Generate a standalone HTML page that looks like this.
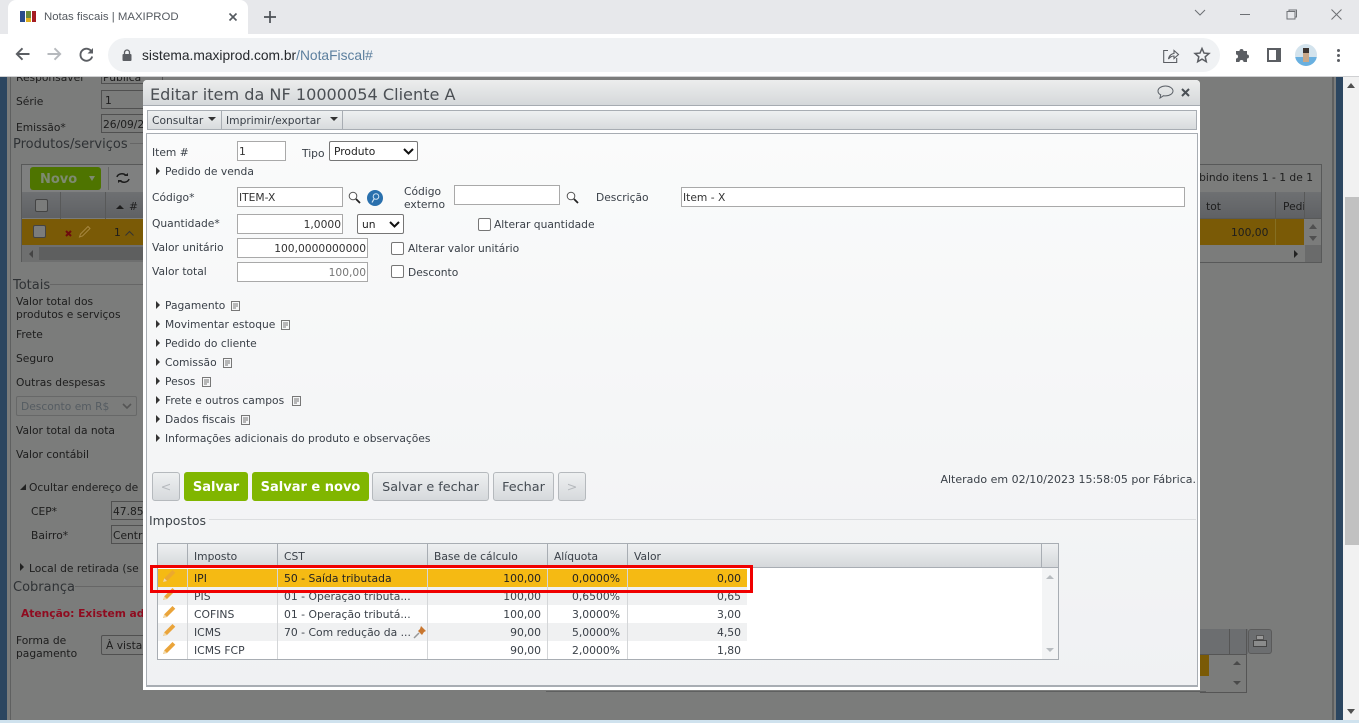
<!DOCTYPE html>
<html><head><meta charset="utf-8"><title>Notas fiscais | MAXIPROD</title>
<style>
html,body{margin:0;padding:0;width:1359px;height:723px;overflow:hidden;background:#7b7c7b;font-family:"DejaVu Sans",sans-serif;font-size:10.7px;color:#3a4048}
.a,.t,.b{position:absolute}
.t{white-space:nowrap;line-height:14px;margin-top:1px}
.d{color:#1d1d1d}
.inp{position:absolute;box-sizing:border-box;border:1px solid #a9a9a9;background:#fff;height:20px;line-height:20px;padding:0 1px;color:#333;white-space:nowrap;overflow:hidden}
.r{text-align:right}
.sel{position:absolute;box-sizing:border-box;border:1px solid #767676;border-radius:2px;background:#fff;height:20px;line-height:19px;padding-left:4px;color:#222}
.cb{position:absolute;box-sizing:border-box;width:13px;height:13px;border:1px solid #767676;border-radius:2px;background:#fff}
.tri{position:absolute;width:0;height:0;border-left:4px solid #333;border-top:4px solid transparent;border-bottom:4px solid transparent}
.btn{position:absolute;box-sizing:border-box;top:472px;height:29px;border:1px solid #b5b9bd;border-radius:3px;background:linear-gradient(#eef0f1,#d6d9dc);text-align:center;line-height:29px;font-size:12.8px;color:#444b52}
.g{background:#80b600;border-color:#80b600;color:#fff;font-weight:bold;font-size:13px}
.cell{position:absolute;white-space:nowrap;line-height:20px;height:18px;overflow:hidden;font-size:10.8px}
.vl{position:absolute;width:1px;background:#d4d6d8}
.rowb{position:absolute;left:158px;width:589px;height:18px}
svg{position:absolute;overflow:visible}
</style></head><body>

<!-- dimmed page -->
<div class="a" style="left:0;top:76px;width:1359px;height:644px;background:#7b7c7b"></div>
<div class="a" style="left:0;top:76px;width:7px;height:644px;background:#2c4660"></div>
<div class="a" style="left:10px;top:76px;width:1px;height:644px;background:#5f6060"></div>
<div class="a" style="left:1332px;top:76px;width:2px;height:644px;background:#5f6060"></div>
<div class="a" style="left:1336px;top:76px;width:7px;height:644px;background:#2c4660"></div>
<div class="a" style="left:1343px;top:76px;width:16px;height:644px;background:#f1f1f1"></div>
<div class="a" style="left:1345px;top:197px;width:14px;height:348px;background:#c1c1c1"></div>
<div class="a" style="left:1347px;top:83px;width:0;height:0;border-left:4px solid transparent;border-right:4px solid transparent;border-bottom:5px solid #505050"></div>
<div class="a" style="left:1347px;top:709px;width:0;height:0;border-left:4px solid transparent;border-right:4px solid transparent;border-top:5px solid #505050"></div>
<div class="a" style="left:0;top:720px;width:1359px;height:3px;background:#cfe2ee"></div>

<div class="t d" style="left:16px;top:70px;">Responsável</div>
<div class="a" style="left:101px;top:70px;width:60px;height:12px;border:1px solid #505050"></div>
<div class="t" style="left:103px;top:70px;color:#1d1d1d">Pública</div>
<div class="t d" style="left:16px;top:94px;">Série</div>
<div class="a" style="left:101px;top:90px;width:60px;height:17px;border:1px solid #505050"></div>
<div class="t d" style="left:105px;top:93px;">1</div>
<div class="t d" style="left:16px;top:120px;">Emissão*</div>
<div class="a" style="left:101px;top:114px;width:60px;height:17px;border:1px solid #505050"></div>
<div class="t d" style="left:103px;top:117px;">26/09/2</div>
<div class="t" style="left:13px;top:137px;font-size:13px;color:#2f3235">Produtos/serviços</div>
<div class="a" style="left:130px;top:143px;width:15px;height:1px;background:#666"></div>

<div class="a" style="left:21px;top:164px;width:1px;height:98px;background:#585959"></div>
<div class="a" style="left:21px;top:164px;width:125px;height:1px;background:#585959"></div>
<div class="a" style="left:22px;top:165px;width:123px;height:27px;background:#7f8080"></div>
<div class="a" style="left:30px;top:167px;width:71px;height:23px;background:#4e7400;border-radius:3px"></div>
<div class="t" style="left:40px;top:172px;font-weight:bold;font-size:13px;color:#7d8a70">Novo</div>
<div class="a" style="left:89px;top:176px;width:0;height:0;border-left:3px solid transparent;border-right:3px solid transparent;border-top:5px solid #7d8a70"></div>
<div class="a" style="left:108px;top:167px;width:1px;height:23px;background:#666"></div>
<svg style="left:116px;top:172px" width="14" height="12"><path d="M1 5a5 4 0 0 1 9-1.500M13 7a5 4 0 0 1-9 1.500" fill="none" stroke="#1d1d1d" stroke-width="1.500"/><path d="M8 4h4V1zM6 8H2v3z" fill="#1d1d1d"/></svg>
<div class="a" style="left:22px;top:192px;width:123px;height:26px;background:linear-gradient(#6e7072,#5f6164)"></div>
<div class="a" style="left:60px;top:192px;width:1px;height:52px;background:#585959"></div>
<div class="a" style="left:105px;top:192px;width:1px;height:52px;background:#585959"></div>
<div class="cb" style="left:35px;top:199px;background:#7b7c7b;border-color:#444"></div>
<div class="a" style="left:116px;top:205px;width:0;height:0;border-left:4px solid transparent;border-right:4px solid transparent;border-bottom:4px solid #1d1d1d"></div>
<div class="t d" style="left:129px;top:199px;">#</div>
<div class="a" style="left:22px;top:219px;width:123px;height:26px;background:#7a5a06"></div>
<div class="cb" style="left:33px;top:225px;background:#7b7c7b;border-color:#444"></div>
<svg style="left:65px;top:230px" width="7" height="7"><path d="M1 1l5 5M6 1l-5 5" stroke="#6e0d0d" stroke-width="2"/></svg>
<svg style="left:78px;top:225px" width="13" height="13"><path d="M1.500 12l1-3L10 1.500l2 2L4.500 11z" fill="none" stroke="#a78740"/></svg>
<div class="t d" style="left:114px;top:225px;">1</div>
<svg style="left:125px;top:231px" width="9" height="5"><path d="M.5 4.500l4-4 4 4" fill="none" stroke="#333"/></svg>
<div class="a" style="left:22px;top:245px;width:123px;height:17px;background:#6e6f6f"></div>
<div class="a" style="left:39px;top:247px;width:106px;height:13px;background:#5e5f5f"></div>
<div class="a" style="left:29px;top:250px;width:0;height:0;border-right:4px solid #444;border-top:4px solid transparent;border-bottom:4px solid transparent"></div>

<div class="a" style="left:1200px;top:164px;width:121px;height:1px;background:#585959"></div>
<div class="a" style="left:1321px;top:164px;width:1px;height:98px;background:#585959"></div>
<div class="a" style="left:1200px;top:262px;width:122px;height:1px;background:#585959"></div>
<div class="t" style="right:46px;top:170px;color:#1d1d1d;">Exibindo itens 1 - 1 de 1</div>
<div class="a" style="left:1200px;top:192px;width:121px;height:26px;background:linear-gradient(#6e7072,#5f6164)"></div>
<div class="a" style="left:1200px;top:218px;width:121px;height:1px;background:#585959"></div>
<div class="t d" style="left:1206px;top:199px;">tot</div>
<div class="t d" style="left:1283px;top:199px;">Pedi</div>
<div class="a" style="left:1275px;top:192px;width:1px;height:27px;background:#585959"></div>
<div class="a" style="left:1304px;top:192px;width:1px;height:27px;background:#585959"></div>
<div class="a" style="left:1200px;top:219px;width:104px;height:26px;background:#7a5a06"></div>
<div class="a" style="left:1275px;top:219px;width:1px;height:26px;background:#856f22"></div>
<div class="t d" style="left:1231px;top:225px;">100,00</div>
<div class="a" style="left:1309px;top:224px;width:0;height:0;border-left:4px solid transparent;border-right:4px solid transparent;border-bottom:5px solid #505050"></div>
<div class="a" style="left:1309px;top:236px;width:0;height:0;border-left:4px solid transparent;border-right:4px solid transparent;border-top:5px solid #505050"></div>
<div class="a" style="left:1305px;top:245px;width:16px;height:17px;background:#6a6b6b"></div>
<div class="tri" style="left:1294px;top:250px;border-left-color:#222"></div>

<div class="t" style="left:13px;top:278px;font-size:13px;color:#2f3235">Totais</div>
<div class="a" style="left:50px;top:284px;width:95px;height:1px;background:#666"></div>
<div class="t d" style="left:16px;top:294px;">Valor total dos</div>
<div class="t d" style="left:16px;top:307px;">produtos e serviços</div>
<div class="t d" style="left:16px;top:327px;">Frete</div>
<div class="t d" style="left:16px;top:351px;">Seguro</div>
<div class="t d" style="left:16px;top:375px;">Outras despesas</div>
<div class="a" style="left:16px;top:396px;width:119px;height:18px;border:1px solid #676868;border-radius:2px"></div>
<div class="t" style="left:21px;top:399px;color:#555c62">Desconto em R$</div>
<svg style="left:122px;top:403px" width="10" height="6"><path d="M1 1l4 4 4-4" fill="none" stroke="#555" stroke-width="1.600"/></svg>
<div class="t d" style="left:16px;top:423px;">Valor total da nota</div>
<div class="t d" style="left:16px;top:447px;">Valor contábil</div>
<div class="t d" style="left:29px;top:480px;">Ocultar endereço de</div>
<div class="a" style="left:20px;top:484px;width:0;height:0;border-left:6px solid transparent;border-bottom:6px solid #222"></div>
<div class="t d" style="left:31px;top:504px;">CEP*</div>
<div class="a" style="left:111px;top:501px;width:34px;height:17px;border:1px solid #505050"></div>
<div class="t d" style="left:113px;top:504px;">47.85</div>
<div class="t d" style="left:31px;top:528px;">Bairro*</div>
<div class="a" style="left:111px;top:525px;width:34px;height:17px;border:1px solid #505050"></div>
<div class="t d" style="left:113px;top:528px;">Centr</div>
<div class="tri" style="left:20px;top:563px;border-left-color:#222"></div>
<div class="t d" style="left:29px;top:561px;">Local de retirada (se</div>
<div class="t" style="left:13px;top:580px;font-size:13px;color:#2f3235">Cobrança</div>
<div class="a" style="left:75px;top:586px;width:70px;height:1px;background:#666"></div>
<div class="t" style="left:21px;top:606px;font-weight:bold;color:#8f0b1f">Atenção: Existem ad</div>
<div class="t d" style="left:16px;top:633px;">Forma de</div>
<div class="t d" style="left:16px;top:646px;">pagamento</div>
<div class="a" style="left:101px;top:635px;width:44px;height:18px;border:1px solid #505050;border-radius:2px"></div>
<div class="t d" style="left:106px;top:638px;">À vista</div>

<div class="a" style="left:1200px;top:629px;width:48px;height:25px;background:#6c6e70"></div>
<div class="a" style="left:1229px;top:629px;width:1px;height:25px;background:#555"></div>
<div class="a" style="left:1246px;top:629px;width:1px;height:63px;background:#555"></div>
<div class="a" style="left:1200px;top:654px;width:46px;height:1px;background:#555"></div>
<div class="a" style="left:1200px;top:655px;width:9px;height:21px;background:#7a5a06"></div>
<div class="a" style="left:1200px;top:692px;width:47px;height:1px;background:#555"></div>
<div class="a" style="left:1233px;top:661px;width:0;height:0;border-left:4px solid transparent;border-right:4px solid transparent;border-bottom:4px solid #4a4a4a"></div>
<div class="a" style="left:1233px;top:681px;width:0;height:0;border-left:4px solid transparent;border-right:4px solid transparent;border-top:4px solid #4a4a4a"></div>
<div class="a" style="left:1248px;top:629px;width:24px;height:25px;background:#6c6e70;border:1px solid #5a5a5a;border-radius:3px;box-sizing:border-box"></div>
<div class="a" style="left:1253px;top:640px;width:14px;height:7px;background:#8a8b8b;border:1px solid #444;box-sizing:border-box"></div>
<div class="a" style="left:1256px;top:635px;width:8px;height:5px;background:#999;border:1px solid #555;box-sizing:border-box"></div>

<div class="a" style="left:546px;top:691px;width:660px;height:1px;background:#5f6060"></div>

<!-- Chrome -->
<div class="a" style="left:0;top:0;width:1359px;height:34px;background:#e7e8eb"></div>
<div class="a" style="left:8px;top:0;width:240px;height:34px;background:#fff;border-radius:8px 8px 0 0"></div>
<div class="a" style="left:0;top:34px;width:1359px;height:42px;background:#fff"></div>
<div class="a" style="left:0;top:76px;width:1359px;height:1px;background:#cfd0d2"></div>
<div class="a" style="left:108px;top:38px;width:1112px;height:34px;background:#f0f2f4;border-radius:17px"></div>
<!-- favicon -->
<div class="a" style="left:20px;top:11px;width:5px;height:11px;background:#2b4c8c"></div>
<div class="a" style="left:26px;top:11px;width:5px;height:11px;background:#6a8a3a"></div>
<div class="a" style="left:26px;top:18px;width:5px;height:4px;background:#e0b020"></div>
<div class="a" style="left:32px;top:11px;width:4px;height:11px;background:#a51c22"></div>
<div class="t" style="left:44px;top:8px;font-family:'Liberation Sans',sans-serif;font-size:11.4px;line-height:16px;color:#555a60">Notas fiscais | MAXIPROD</div>
<svg style="left:228px;top:12px" width="10" height="10"><path d="M1.500 1.500l7 7M8.500 1.500l-7 7" stroke="#555a60" stroke-width="1.600"/></svg>
<svg style="left:264px;top:11px" width="12" height="12"><path d="M6 0v12M0 6h12" stroke="#4c5055" stroke-width="1.700"/></svg>
<svg style="left:1194px;top:9px" width="12" height="8"><path d="M1 1l5 5 5-5" fill="none" stroke="#6d7074" stroke-width="1"/></svg>
<div class="a" style="left:1240px;top:14px;width:10px;height:1px;background:#6d7074"></div>
<svg style="left:1286px;top:9px" width="12" height="11"><path d="M3 2.500V1h7.500v7H9M1 2.500h8v7.500H1z" fill="none" stroke="#6d7074"/></svg>
<svg style="left:1331px;top:9px" width="11" height="11"><path d="M.5.500l10 10M10.500.500l-10 10" stroke="#6d7074" stroke-width="1"/></svg>
<svg style="left:15px;top:47px" width="15" height="14"><path d="M14.500 7H2M7.500 1.300L1.800 7l5.700 5.700" fill="none" stroke="#5b5e63" stroke-width="1.900"/></svg>
<svg style="left:47px;top:47px" width="15" height="14"><path d="M.5 7H13M7.500 1.300L13.200 7l-5.700 5.700" fill="none" stroke="#b6b9bd" stroke-width="1.900"/></svg>
<svg style="left:79px;top:47px" width="15" height="15"><path d="M12.800 5A6 6 0 1 0 13.200 9.500" fill="none" stroke="#5b5e63" stroke-width="1.900"/><path d="M14 1v5.500H8.500z" fill="#5b5e63"/></svg>
<svg style="left:122px;top:49px" width="10" height="12"><rect x="0.500" y="5" width="9" height="7" rx="1" fill="#5b5e63"/><path d="M2.500 5.500V3.500a2.500 2.500 0 0 1 5 0v2" fill="none" stroke="#5b5e63" stroke-width="1.300"/></svg>
<div class="t" style="left:142px;top:46px;font-family:'Liberation Sans',sans-serif;font-size:13.8px;line-height:17px;color:#25282c">sistema.maxiprod.com.br<span style="color:#5c7f9e">/NotaFiscal#</span></div>
<svg style="left:1163px;top:48px" width="16" height="15"><path d="M5 2.500H.7v12h13V10M5.500 11C6 7.500 9 5.500 11 5.500V2.500l4.500 4-4.500 4V8C9 8 7 9 5.500 11z" fill="none" stroke="#5b5e63" stroke-width="1.100"/></svg>
<svg style="left:1194px;top:47px" width="16" height="16"><path d="M8 1.500l2 4.600 5 .4-3.800 3.300 1.100 4.900L8 12.100l-4.300 2.600 1.100-4.900L1 6.500l5-.4z" fill="none" stroke="#5b5e63" stroke-width="1.500"/></svg>
<svg style="left:1235px;top:48px" width="15" height="15"><path d="M1 4h3.500a2 2 0 0 1 4 0H12v3.500a2 2 0 0 1 0 4V15H8.500a2 2 0 0 0-4 0H1v-3.500a2 2 0 0 0 0-4z" fill="#5b5e63" transform="translate(0 -1)"/></svg>
<div class="a" style="left:1267px;top:48px;width:7px;height:10px;border:2px solid #5b5e63;background:#fff;border-right:5px solid #5b5e63"></div>
<div class="a" style="left:1295px;top:44px;width:22px;height:22px;border-radius:50%;background:linear-gradient(#d3e3ed 60%,#69b0e0 60%);overflow:hidden"></div>
<div class="a" style="left:1303px;top:49px;width:6px;height:13px;background:#c9a98a"></div>
<div class="a" style="left:1303px;top:48px;width:6px;height:5px;background:#3c3532"></div>
<div class="a" style="left:1337px;top:49px;width:3px;height:3px;border-radius:50%;background:#5b5e63"></div>
<div class="a" style="left:1337px;top:54px;width:3px;height:3px;border-radius:50%;background:#5b5e63"></div>
<div class="a" style="left:1337px;top:59px;width:3px;height:3px;border-radius:50%;background:#5b5e63"></div>

<!-- Modal -->
<div class="a" style="left:143px;top:80px;width:1057px;height:610px;background:#fff;border-radius:4px 4px 0 0"></div>
<div class="a" style="left:143px;top:80px;width:1057px;height:26px;background:linear-gradient(#eceded,#d5d8da);border-radius:4px 4px 0 0;border-bottom:1px solid #a6abb1;box-sizing:border-box"></div>
<div class="t" style="left:150px;top:84px;font-size:16.1px;line-height:20px;color:#4b4f54">Editar item da NF 10000054 Cliente A</div>
<svg style="left:1157px;top:85px" width="17" height="15"><path d="M8.500 1C4.400 1 1 3.100 1 6c0 1.600 1 3 2.700 3.800L3 13l3.500-2.300c.6.100 1.300.2 2 .2 4.100 0 7.500-2.200 7.500-4.900S12.600 1 8.500 1z" fill="none" stroke="#5a5f66"/></svg>
<svg style="left:1181px;top:88px" width="9" height="9"><path d="M1 1l7 7M8 1l-7 7" stroke="#4a4f55" stroke-width="2"/></svg>
<div class="a" style="left:147px;top:110px;width:1050px;height:20px;box-sizing:border-box;border:1px solid #a8adb3;background:linear-gradient(#eef0f1,#d8dbdd)"></div>
<div class="t" style="left:152px;top:113px;">Consultar</div>
<div class="a" style="left:208px;top:117px;width:0;height:0;border-left:4px solid transparent;border-right:4px solid transparent;border-top:4px solid #333"></div>
<div class="a" style="left:221px;top:111px;width:1px;height:18px;background:#a8adb3"></div>
<div class="t" style="left:226px;top:113px;">Imprimir/exportar</div>
<div class="a" style="left:330px;top:117px;width:0;height:0;border-left:4px solid transparent;border-right:4px solid transparent;border-top:4px solid #333"></div>
<div class="a" style="left:342px;top:111px;width:1px;height:18px;background:#a8adb3"></div>

<div class="a" style="left:146px;top:133px;width:1052px;height:554px;box-sizing:border-box;border:1px solid #a8adb3;border-bottom-width:2px;background:linear-gradient(#fafbfb,#f0f1f3)"></div>

<!-- form -->
<div class="t" style="left:152px;top:145px;">Item #</div>
<div class="inp" style="left:237px;top:141px;width:49px;">1</div>
<div class="t" style="left:302px;top:146px;">Tipo</div>
<div class="sel" style="left:329px;top:141px;width:89px;">Produto</div>
<svg style="left:403px;top:148px" width="11" height="7"><path d="M1 1l4.500 4.500L10 1" fill="none" stroke="#111" stroke-width="2"/></svg>
<div class="tri" style="left:156px;top:167px"></div>
<div class="t" style="left:165px;top:164px;">Pedido de venda</div>
<div class="t" style="left:152px;top:190px;">Código*</div>
<div class="inp" style="left:237px;top:187px;width:106px;">ITEM-X</div>
<svg style="left:348px;top:191px" width="13" height="13"><circle cx="5" cy="5" r="3.800" fill="#fff" stroke="#555" stroke-width="1"/><path d="M8 8l4 4" stroke="#222" stroke-width="1.800"/></svg>
<div class="a" style="left:367px;top:190px;width:16px;height:16px;border-radius:50%;background:#2a70ad"></div>
<svg style="left:367px;top:190px" width="16" height="16"><circle cx="9" cy="6.500" r="2.800" fill="none" stroke="#cfe2f2"/><path d="M7 9l-2 3.500" stroke="#cfe2f2" stroke-width="1.200"/></svg>
<div class="t" style="left:404px;top:184px;">Código</div>
<div class="t" style="left:404px;top:197px;">externo</div>
<div class="inp" style="left:454px;top:185px;width:106px;"></div>
<svg style="left:566px;top:191px" width="13" height="13"><circle cx="5" cy="5" r="3.800" fill="#fff" stroke="#555" stroke-width="1"/><path d="M8 8l4 4" stroke="#222" stroke-width="1.800"/></svg>
<div class="t" style="left:596px;top:190px;">Descrição</div>
<div class="inp" style="left:681px;top:187px;width:504px;">Item - X</div>
<div class="t" style="left:152px;top:216px;">Quantidade*</div>
<div class="inp r" style="left:237px;top:214px;width:106px;">1,0000</div>
<div class="sel" style="left:357px;top:214px;width:47px;">un</div>
<svg style="left:389px;top:221px" width="11" height="7"><path d="M1 1l4.500 4.500L10 1" fill="none" stroke="#111" stroke-width="2"/></svg>
<div class="cb" style="left:478px;top:218px"></div>
<div class="t" style="left:494px;top:217px;">Alterar quantidade</div>
<div class="t" style="left:152px;top:240px;">Valor unitário</div>
<div class="inp r" style="left:237px;top:238px;width:131px;">100,0000000000</div>
<div class="cb" style="left:391px;top:242px"></div>
<div class="t" style="left:408px;top:241px;">Alterar valor unitário</div>
<div class="t" style="left:152px;top:264px;">Valor total</div>
<div class="inp r" style="left:237px;top:262px;width:131px;color:#777">100,00</div>
<div class="cb" style="left:391px;top:265px"></div>
<div class="t" style="left:408px;top:265px;">Desconto</div>

<div class="tri" style="left:156px;top:301px"></div><div class="t" style="left:165px;top:298px;">Pagamento</div>
<div class="tri" style="left:156px;top:320px"></div><div class="t" style="left:165px;top:317px;">Movimentar estoque</div>
<div class="tri" style="left:156px;top:339px"></div><div class="t" style="left:165px;top:336px;">Pedido do cliente</div>
<div class="tri" style="left:156px;top:358px"></div><div class="t" style="left:165px;top:355px;">Comissão</div>
<div class="tri" style="left:156px;top:377px"></div><div class="t" style="left:165px;top:374px;">Pesos</div>
<div class="tri" style="left:156px;top:396px"></div><div class="t" style="left:165px;top:393px;">Frete e outros campos</div>
<div class="tri" style="left:156px;top:415px"></div><div class="t" style="left:165px;top:412px;">Dados fiscais</div>
<div class="tri" style="left:156px;top:434px"></div><div class="t" style="left:165px;top:431px;">Informações adicionais do produto e observações</div>
<svg style="left:231px;top:301px" width="10" height="10"><path d="M.5.500h8v9h-8zM2 3h5M2 5h5M2 7h3" fill="none" stroke="#777"/></svg>
<svg style="left:281px;top:320px" width="10" height="10"><path d="M.5.500h8v9h-8zM2 3h5M2 5h5M2 7h3" fill="none" stroke="#777"/></svg>
<svg style="left:223px;top:358px" width="10" height="10"><path d="M.5.500h8v9h-8zM2 3h5M2 5h5M2 7h3" fill="none" stroke="#777"/></svg>
<svg style="left:202px;top:377px" width="10" height="10"><path d="M.5.500h8v9h-8zM2 3h5M2 5h5M2 7h3" fill="none" stroke="#777"/></svg>
<svg style="left:292px;top:396px" width="10" height="10"><path d="M.5.500h8v9h-8zM2 3h5M2 5h5M2 7h3" fill="none" stroke="#777"/></svg>
<svg style="left:241px;top:415px" width="10" height="10"><path d="M.5.500h8v9h-8zM2 3h5M2 5h5M2 7h3" fill="none" stroke="#777"/></svg>

<div class="btn" style="left:152px;width:28px;color:#b5b9bd">&lt;</div>
<div class="btn g" style="left:184px;width:64px;">Salvar</div>
<div class="btn g" style="left:252px;width:117px;">Salvar e novo</div>
<div class="btn" style="left:372px;width:117px;">Salvar e fechar</div>
<div class="btn" style="left:493px;width:61px;">Fechar</div>
<div class="btn" style="left:558px;width:28px;color:#b5b9bd">&gt;</div>
<div class="t" style="right:163px;top:472px;font-size:11px">Alterado em 02/10/2023 15:58:05 por Fábrica.</div>

<div class="t" style="left:149px;top:513px;font-size:12.500px;color:#3f454b">Impostos</div>
<div class="a" style="left:209px;top:519px;width:987px;height:1px;background:#dcdee0"></div>

<!-- grid -->
<div class="a" style="left:157px;top:543px;width:902px;height:117px;box-sizing:border-box;border:1px solid #a8adb3;background:#fff"></div>
<div class="a" style="left:158px;top:544px;width:900px;height:24px;box-sizing:border-box;background:linear-gradient(#eef0f1,#d5d8db);border-bottom:1px solid #a8adb3"></div>
<div class="vl" style="left:187px;top:544px;height:24px;background:#a8adb3"></div>
<div class="vl" style="left:277px;top:544px;height:24px;background:#a8adb3"></div>
<div class="vl" style="left:427px;top:544px;height:24px;background:#a8adb3"></div>
<div class="vl" style="left:547px;top:544px;height:24px;background:#a8adb3"></div>
<div class="vl" style="left:627px;top:544px;height:24px;background:#a8adb3"></div>
<div class="vl" style="left:1041px;top:544px;height:24px;background:#a8adb3"></div>
<div class="t" style="left:194px;top:549px;">Imposto</div>
<div class="t" style="left:284px;top:549px;">CST</div>
<div class="t" style="left:434px;top:549px;">Base de cálculo</div>
<div class="t" style="left:554px;top:549px;">Alíquota</div>
<div class="t" style="left:634px;top:549px;">Valor</div>

<div class="rowb" style="top:569px;background:#f5ba13"></div>
<div class="rowb" style="top:587px;background:#f0f1f2"></div>
<div class="rowb" style="top:623px;background:#f0f1f2"></div>
<div class="a" style="left:1042px;top:568px;width:16px;height:91px;background:#f3f4f5"></div>
<div class="a" style="left:1046px;top:575px;width:0;height:0;border-left:4px solid transparent;border-right:4px solid transparent;border-bottom:4px solid #b8bcc0"></div>
<div class="a" style="left:1046px;top:648px;width:0;height:0;border-left:4px solid transparent;border-right:4px solid transparent;border-top:4px solid #b8bcc0"></div>
<div class="vl" style="left:187px;top:569px;height:90px"></div>
<div class="vl" style="left:277px;top:569px;height:90px"></div>
<div class="vl" style="left:427px;top:569px;height:90px"></div>
<div class="vl" style="left:547px;top:569px;height:90px"></div>
<div class="vl" style="left:627px;top:569px;height:90px"></div>

<svg style="left:162px;top:569px" width="14" height="14"><path d="M1 13l1.300-3.800L10.500 1l2.800 2.700L5 12z" fill="#e8a33a" opacity=".7"/><path d="M1 13l1.300-3.800L5 12z" fill="#f0d8a8"/></svg>
<svg style="left:162px;top:587px" width="14" height="14"><path d="M1 13l1.300-3.800L10.500 1l2.800 2.700L5 12z" fill="#eaa43a"/><path d="M1 13l1.300-3.800L5 12z" fill="#f0d8a8"/></svg>
<svg style="left:162px;top:605px" width="14" height="14"><path d="M1 13l1.300-3.800L10.500 1l2.800 2.700L5 12z" fill="#eaa43a"/><path d="M1 13l1.300-3.800L5 12z" fill="#f0d8a8"/></svg>
<svg style="left:162px;top:623px" width="14" height="14"><path d="M1 13l1.300-3.800L10.500 1l2.800 2.700L5 12z" fill="#eaa43a"/><path d="M1 13l1.300-3.800L5 12z" fill="#f0d8a8"/></svg>
<svg style="left:162px;top:641px" width="14" height="14"><path d="M1 13l1.300-3.800L10.500 1l2.800 2.700L5 12z" fill="#eaa43a"/><path d="M1 13l1.300-3.800L5 12z" fill="#f0d8a8"/></svg>

<div class="cell" style="left:194px;top:569px;color:#222">IPI</div>
<div class="cell" style="left:284px;top:569px;color:#222">50 - Saída tributada</div>
<div class="cell r" style="left:428px;width:113px;top:569px;color:#222">100,00</div>
<div class="cell r" style="left:548px;width:72px;top:569px;color:#222">0,0000%</div>
<div class="cell r" style="left:628px;width:113px;top:569px;color:#222">0,00</div>

<div class="cell" style="left:194px;top:587px;">PIS</div>
<div class="cell" style="left:284px;top:587px;">01 - Operação tributa...</div>
<div class="cell r" style="left:428px;width:113px;top:587px;">100,00</div>
<div class="cell r" style="left:548px;width:72px;top:587px;">0,6500%</div>
<div class="cell r" style="left:628px;width:113px;top:587px;">0,65</div>

<div class="cell" style="left:194px;top:605px;">COFINS</div>
<div class="cell" style="left:284px;top:605px;">01 - Operação tributá...</div>
<div class="cell r" style="left:428px;width:113px;top:605px;">100,00</div>
<div class="cell r" style="left:548px;width:72px;top:605px;">3,0000%</div>
<div class="cell r" style="left:628px;width:113px;top:605px;">3,00</div>

<div class="cell" style="left:194px;top:623px;">ICMS</div>
<div class="cell" style="left:284px;top:623px;">70 - Com redução da ...</div>
<svg style="left:413px;top:625px" width="14" height="14"><path d="M8 1l5 5-2 1-2 3-4-4 2-2z" fill="#c9772f"/><path d="M6 8l-5 5" stroke="#999" stroke-width="1.500"/></svg>
<div class="cell r" style="left:428px;width:113px;top:623px;">90,00</div>
<div class="cell r" style="left:548px;width:72px;top:623px;">5,0000%</div>
<div class="cell r" style="left:628px;width:113px;top:623px;">4,50</div>

<div class="cell" style="left:194px;top:641px;">ICMS FCP</div>
<div class="cell r" style="left:428px;width:113px;top:641px;">90,00</div>
<div class="cell r" style="left:548px;width:72px;top:641px;">2,0000%</div>
<div class="cell r" style="left:628px;width:113px;top:641px;">1,80</div>

<div class="a" style="left:150px;top:565px;width:603px;height:28px;box-sizing:border-box;border:3px solid #f00000"></div>
</body></html>
